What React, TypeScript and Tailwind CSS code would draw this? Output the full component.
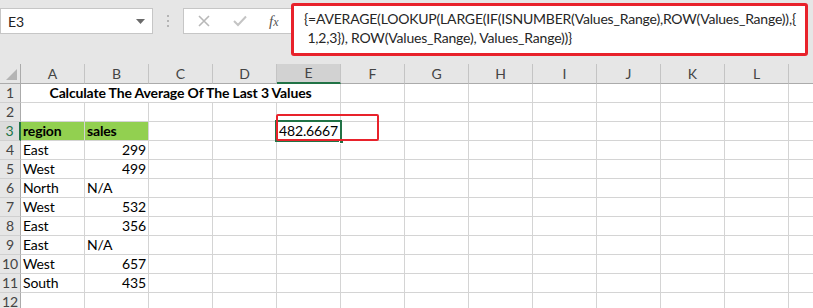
import React from "react";

const COLS = ["A", "B", "C", "D", "E", "F", "G", "H", "I", "J", "K", "L", "M"];

type Cell = { t: string; right?: boolean; bold?: boolean; green?: boolean };

const data: Record<number, Record<string, Cell>> = {
  3: {
    A: { t: "region", bold: true, green: true },
    B: { t: "sales", bold: true, green: true },
    E: { t: "482.6667", right: true },
  },
  4: { A: { t: "East" }, B: { t: "299", right: true } },
  5: { A: { t: "West" }, B: { t: "499", right: true } },
  6: { A: { t: "North" }, B: { t: "N/A" } },
  7: { A: { t: "West" }, B: { t: "532", right: true } },
  8: { A: { t: "East" }, B: { t: "356", right: true } },
  9: { A: { t: "East" }, B: { t: "N/A" } },
  10: { A: { t: "West" }, B: { t: "657", right: true } },
  11: { A: { t: "South" }, B: { t: "435", right: true } },
};

function RowHeader({ n }: { n: number }) {
  const sel = n === 3;
  return (
    <div
      className={
        "w-[21px] h-[19px] shrink-0 border-b border-b-[#d0d0d0] flex items-center justify-center text-[14px] leading-none " +
        (sel
          ? "bg-[#dcdcdc] border-r-2 border-r-[#217346] text-[#217346]"
          : "bg-[#e6e6e6] border-r border-r-[#ababab] text-[#444]")
      }
    >
      {n}
    </div>
  );
}

function GridCell({ c }: { c?: Cell }) {
  return (
    <div
      className={
        "w-[64px] h-[19px] shrink-0 border-r border-b border-[#d4d4d4] flex items-center px-[2px] text-[14px] tracking-[-0.15px] leading-none text-black whitespace-nowrap overflow-visible " +
        (c?.green ? "bg-[#92d050] " : "bg-white ") +
        (c?.right ? "justify-end " : "justify-start ") +
        (c?.bold ? "font-bold " : "")
      }
    >
      {c?.t}
    </div>
  );
}

export default function App() {
  return (
    <div
      className="w-[813px] h-[308px] overflow-hidden bg-white relative"
      style={{ fontFamily: "Lato, 'Open Sans', sans-serif" }}
    >
      {/* Formula bar area */}
      <div className="h-[64px] bg-[#e6e6e6] flex items-start">
        {/* Name box */}
        <div className="mt-[8px] w-[153px] h-[26px] bg-white border border-[#c6c6c6] flex items-center justify-between pl-[7px] pr-[7px] shrink-0">
          <span className="text-[14px] text-[#222]">E3</span>
          <svg width="9" height="5" viewBox="0 0 9 5">
            <path d="M0 0 L9 0 L4.5 5 Z" fill="#6a6a6a" />
          </svg>
        </div>
        {/* dots */}
        <div className="w-[30px] mt-[15px] flex flex-col items-center gap-[3px] shrink-0">
          <div className="w-[2px] h-[2px] bg-[#b4b4b4]" />
          <div className="w-[2px] h-[2px] bg-[#b4b4b4]" />
          <div className="w-[2px] h-[2px] bg-[#b4b4b4]" />
        </div>
        {/* X check fx */}
        <div className="mt-[8px] w-[108px] h-[26px] bg-white border border-[#c6c6c6] border-r-0 flex items-center shrink-0">
          <svg className="ml-[14px]" width="12" height="12" viewBox="0 0 12 12">
            <path d="M1 1 L11 11 M11 1 L1 11" stroke="#b8b8b8" strokeWidth="1.6" />
          </svg>
          <svg className="ml-[23px]" width="14" height="12" viewBox="0 0 14 12">
            <path d="M1 6 L5 10 L13 1.5" stroke="#c4c4c4" strokeWidth="2" fill="none" />
          </svg>
          <span
            className="ml-[22px] text-[15px] italic text-[#555] leading-none"
            style={{ fontFamily: "'Liberation Serif', serif" }}
          >
            f<span className="text-[12px]">x</span>
          </span>
        </div>
        {/* Formula input */}
        <div className="mt-[3px] w-[517px] h-[53px] bg-white border-[3px] border-[#e8222b] rounded-[3px] shrink-0 pl-[10px] pt-[3px] text-[14px] tracking-[-0.2px] leading-[19px] text-[#262626] whitespace-pre">
          <div>{"{=AVERAGE(LOOKUP(LARGE(IF(ISNUMBER(Values_Range),ROW(Values_Range)),{"}</div>
          <div>{" 1,2,3}), ROW(Values_Range), Values_Range))}"}</div>
        </div>
      </div>

      {/* Column headers */}
      <div className="flex h-[20px]">
        <div className="w-[21px] h-[20px] shrink-0 bg-[#e6e6e6] border-r border-b border-r-[#ababab] border-b-[#ababab] relative">
          <svg className="absolute right-[3px] bottom-[3px]" width="11" height="11" viewBox="0 0 11 11">
            <path d="M11 0 L11 11 L0 11 Z" fill="#b4b4b4" />
          </svg>
        </div>
        {COLS.map((c) => (
          <div
            key={c}
            className={
              "w-[64px] h-[20px] shrink-0 border-r border-r-[#c4c4c4] flex items-center justify-center text-[14px] leading-none text-[#444] " +
              (c === "E"
                ? "bg-[#d2d2d2] border-b-2 border-b-[#217346]"
                : "bg-[#e6e6e6] border-b border-b-[#ababab]")
            }
          >
            {c}
          </div>
        ))}
      </div>

      {/* Row 1 (merged A1:E1) */}
      <div className="flex">
        <RowHeader n={1} />
        <div className="w-[320px] h-[19px] shrink-0 border-r border-b border-[#d4d4d4] flex items-center justify-center text-[14px] tracking-[-0.15px] font-bold leading-none text-black whitespace-nowrap">
          Calculate The Average Of The Last 3 Values
        </div>
        {COLS.slice(5).map((c) => (
          <GridCell key={c} />
        ))}
      </div>

      {Array.from({ length: 11 }, (_, i) => i + 2).map((r) => (
        <div className="flex" key={r}>
          <RowHeader n={r} />
          {COLS.map((c) => (
            <GridCell key={c} c={data[r]?.[c]} />
          ))}
        </div>
      ))}

      {/* Active cell E3 */}
      <div className="absolute left-[275px] top-[120px] w-[67px] h-[22px] border-2 border-[#217346] pointer-events-none" />
      <div className="absolute left-[339px] top-[139px] w-[5px] h-[5px] bg-[#217346] border border-white pointer-events-none" />
      {/* Red annotation */}
      <div className="absolute left-[276px] top-[114px] w-[103px] h-[27px] border-[2.5px] border-[#e8222b] rounded-[2px] pointer-events-none" />
    </div>
  );
}
